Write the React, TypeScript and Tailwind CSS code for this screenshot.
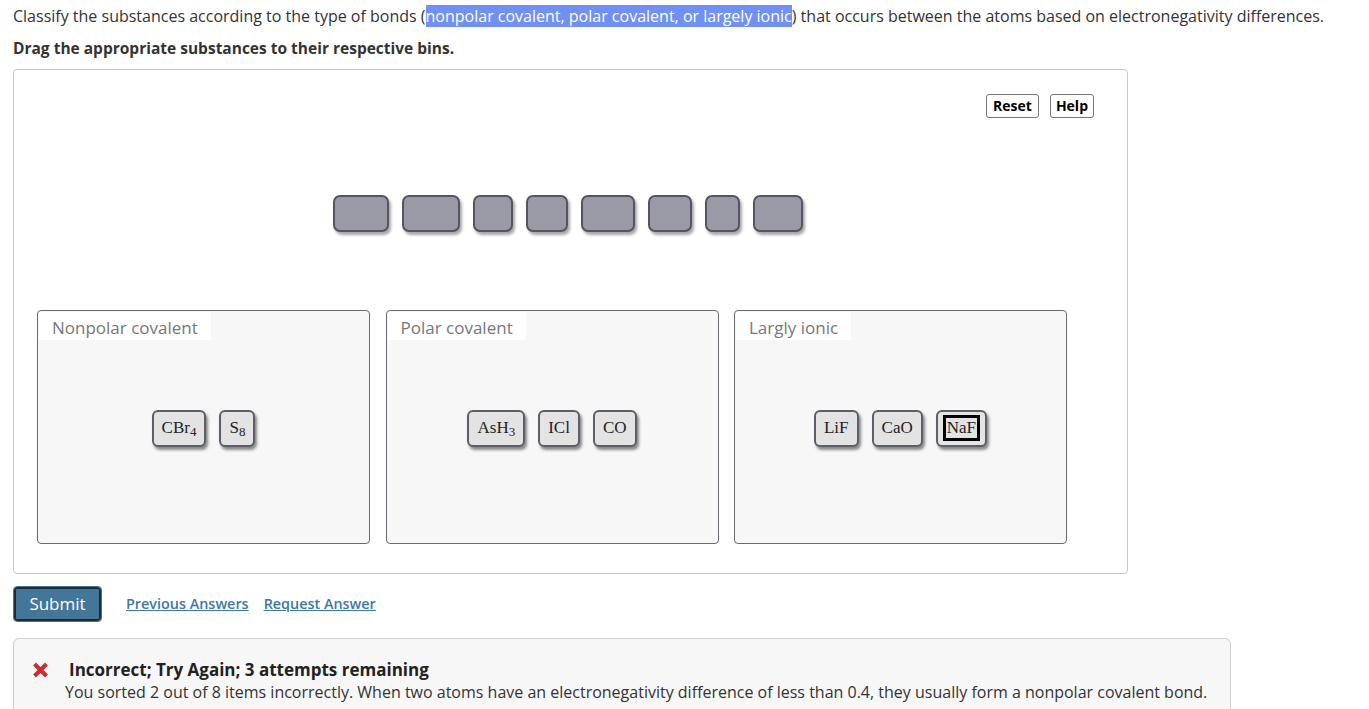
import React from 'react';

const slots = [56, 57, 40, 42, 53, 44, 35, 50];

interface Chip {
  base: string;
  sub?: string;
  focused?: boolean;
}

const bins: { title: string; chips: Chip[] }[] = [
  { title: 'Nonpolar covalent', chips: [{ base: 'CBr', sub: '4' }, { base: 'S', sub: '8' }] },
  { title: 'Polar covalent', chips: [{ base: 'AsH', sub: '3' }, { base: 'ICl' }, { base: 'CO' }] },
  { title: 'Largly ionic', chips: [{ base: 'LiF' }, { base: 'CaO' }, { base: 'NaF', focused: true }] },
];

function ChipView({ chip }: { chip: Chip }) {
  return (
    <div className="h-[37px] px-[8px] flex items-center bg-[#e3e3e3] border-2 border-[#5e5e68] rounded-[6px] shadow-[2px_3px_3px_rgba(0,0,0,0.45)] text-[17px] text-[#222] font-['Liberation_Serif',serif]">
      <span className={chip.focused ? 'outline-[3px] outline-solid outline-black px-[1px] leading-[20px]' : ''}>
        {chip.base}
        {chip.sub && <span className="text-[13px] relative top-[3px]">{chip.sub}</span>}
      </span>
    </div>
  );
}

export default function App() {
  return (
    <div className="min-h-[709px] bg-white text-[#333] font-['Open_Sans',sans-serif] text-[15px] px-[13px] overflow-hidden">
      <p className="pt-[5px] leading-[22px] whitespace-nowrap text-[16px]">
        Classify the substances according to the type of bonds (
        <span className="bg-[#7190f3] text-white">nonpolar covalent, polar covalent, or largely ionic</span>
        ) that occurs between the atoms based on electronegativity differences.
      </p>
      <p className="mt-[10px] font-bold leading-[22px] text-[15.5px]">Drag the appropriate substances to their respective bins.</p>

      <div className="mt-[10px] w-[1115px] h-[505px] border border-[#c8c8c8] rounded-[4px] flex flex-col">
        <div className="flex justify-end gap-[11px] pt-[24px] pr-[33px]">
          <button className="h-[24px] px-[6px] border border-[#777] rounded-[3px] bg-white text-[14px] font-bold text-black leading-none">Reset</button>
          <button className="h-[24px] px-[5px] border border-[#777] rounded-[3px] bg-white text-[14px] font-bold text-black leading-none">Help</button>
        </div>

        <div className="flex gap-[13px] pl-[319px] mt-[77px]">
          {slots.map((w, i) => (
            <div
              key={i}
              style={{ width: w + (i === 1 || i === 4 ? 1 : 0) }}
              className="h-[37px] bg-[#9a99a6] border-2 border-[#55555f] rounded-[7px] shadow-[2px_3px_3px_rgba(0,0,0,0.35)]"
            />
          ))}
        </div>

        <div className="flex gap-[15.5px] pl-[23px] mt-[78px]">
          {bins.map((bin) => (
            <div
              key={bin.title}
              className="w-[333px] h-[234px] bg-[#f7f7f7] border-[1.5px] border-[#6a6a72] rounded-[4px] relative flex items-center justify-center"
            >
              <div className="absolute left-[1px] top-[1px] bg-white pl-[13px] pr-[13px] h-[28px] pt-[3px] flex items-center text-[17px] text-[#777]">
                {bin.title}
              </div>
              <div className="flex gap-[13px] mt-[2px]">
                {bin.chips.map((c) => (
                  <ChipView key={c.base} chip={c} />
                ))}
              </div>
            </div>
          ))}
        </div>
      </div>

      <div className="flex items-center mt-[13px]">
        <button className="ml-[1px] w-[87px] h-[34px] bg-[#437697] text-white text-[17px] border-2 border-[#1d2b36] rounded-[3px] outline outline-1 outline-[#437697] outline-offset-0">
          Submit
        </button>
        <a className="ml-[25px] text-[#3d78a0] font-semibold underline text-[14.4px]">Previous Answers</a>
        <a className="ml-[15px] text-[#3d78a0] font-semibold underline text-[14.4px]">Request Answer</a>
      </div>

      <div className="mt-[17px] w-[1218px] h-[80px] bg-[#f7f7f7] border border-[#cfcfcf] rounded-t-[6px] pt-[19px]">
        <div className="flex items-center">
          <svg width="17" height="16" viewBox="0 0 17 16" className="ml-[18px]">
            <path d="M2.5 2 L14.5 14 M14.5 2 L2.5 14" stroke="#c9302c" strokeWidth="4" strokeLinecap="butt" />
          </svg>
          <span className="ml-[20px] font-bold text-[17px] text-[#222] leading-[24px]">Incorrect; Try Again; 3 attempts remaining</span>
        </div>
        <p className="ml-[51px] text-[16px] text-[#333] leading-[20px]">
          You sorted 2 out of 8 items incorrectly. When two atoms have an electronegativity difference of less than 0.4, they usually form a nonpolar covalent bond.
        </p>
      </div>
    </div>
  );
}
